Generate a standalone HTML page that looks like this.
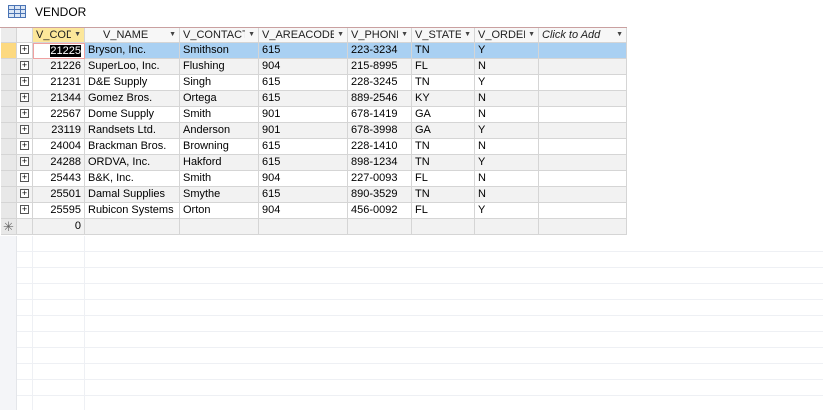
<!DOCTYPE html><html><head><style>
body{margin:0;width:823px;height:410px;background:#fff;font-family:"Liberation Sans",sans-serif;font-size:11px;color:#000;overflow:hidden;position:relative}
.t{position:absolute;left:35px;top:5px;font-size:12px}
.bar{position:absolute;left:0;top:27px;width:627px;height:1px;background:#c9a0a0}
.row{position:absolute;left:1px;height:16px;display:flex}
.row>div{box-sizing:border-box;height:16px;border-right:1px solid #d5d5d5;border-bottom:1px solid #d5d5d5;padding:0 3px;white-space:nowrap;overflow:hidden;line-height:15px;position:relative;flex:none}
.c0{width:16px}.c1{width:16px}.c2{width:52px}.c3{width:95px}.c4{width:79px}.c5{width:89px}.c6{width:64px}.c7{width:63px}.c8{width:64px}.c9{width:88px}
.row>div.c0{background:#e8e8e8;padding:0}
.h>div{background:#f7f7f7;color:#222;height:15px;line-height:14px}
.h>div.s{background:#fce79a}
.h .lbl{display:block;overflow:hidden;margin-right:10px}
.g>div{background:#f2f2f2}
.a>div{background:#a9d0f2}
.a>div.c0{background:#fcd980}
.ex{text-align:center;padding:0!important}
.ex span{display:inline-block;width:7px;height:7px;border:1px solid #555;font-size:9px;line-height:7px;text-align:center;background:#fff;vertical-align:middle;margin-top:-2px}
.r{text-align:right}
.dd{position:absolute;right:3px;top:0;font-size:7px;color:#444}
</style></head><body>
<svg style="position:absolute;left:8px;top:5px" width="18" height="13"><rect x="0.5" y="0.5" width="17" height="12" fill="#dbe6f5" stroke="#4a74b5"/><path d="M0 4.5H18M0 8.5H18M6.5 0V13M12.5 0V13" stroke="#4a74b5"/></svg>
<div class="t">VENDOR</div>
<div class="bar"></div>
<div style="position:absolute;left:0;top:236px;width:823px;height:174px;background:repeating-linear-gradient(to bottom,#fff 0 15px,#eef0f4 15px 16px)"></div>
<div style="position:absolute;left:0;top:236px;width:16px;height:174px;background:#f4f5f8"></div>
<div style="position:absolute;left:16px;top:236px;width:1px;height:174px;background:#e4e6ea"></div>
<div style="position:absolute;left:32px;top:236px;width:1px;height:174px;background:#eef0f4"></div>
<div style="position:absolute;left:84px;top:236px;width:1px;height:174px;background:#eef0f4"></div>

<div class="row h" style="top:28px"><div class="c0" style="background:#ececec"></div><div class="c1"></div><div class="c2 s"><span class="lbl">V_CODE</span><span class="dd">▼</span></div><div class="c3" style="padding-left:18px"><span class="lbl">V_NAME</span><span class="dd">▼</span></div><div class="c4"><span class="lbl">V_CONTACT</span><span class="dd">▼</span></div><div class="c5"><span class="lbl">V_AREACODE</span><span class="dd">▼</span></div><div class="c6"><span class="lbl">V_PHONE</span><span class="dd">▼</span></div><div class="c7"><span class="lbl">V_STATE</span><span class="dd">▼</span></div><div class="c8"><span class="lbl">V_ORDER</span><span class="dd">▼</span></div><div class="c9"><i>Click to Add</i><span class="dd">▼</span></div></div>

<div class="row a" style="top:43px"><div class="c0"></div><div class="c1 ex" style="background:#fff"><span>+</span></div><div class="c2 r" style="background:#fff;border:1px solid #f0a0a0"><span style="background:#000;color:#fff">21225</span></div><div class="c3">Bryson, Inc.</div><div class="c4">Smithson</div><div class="c5">615</div><div class="c6">223-3234</div><div class="c7">TN</div><div class="c8">Y</div><div class="c9"></div></div>
<div class="row g" style="top:59px"><div class="c0"></div><div class="c1 ex"><span>+</span></div><div class="c2 r">21226</div><div class="c3">SuperLoo, Inc.</div><div class="c4">Flushing</div><div class="c5">904</div><div class="c6">215-8995</div><div class="c7">FL</div><div class="c8">N</div><div class="c9"></div></div>
<div class="row" style="top:75px"><div class="c0"></div><div class="c1 ex"><span>+</span></div><div class="c2 r">21231</div><div class="c3">D&amp;E Supply</div><div class="c4">Singh</div><div class="c5">615</div><div class="c6">228-3245</div><div class="c7">TN</div><div class="c8">Y</div><div class="c9"></div></div>
<div class="row g" style="top:91px"><div class="c0"></div><div class="c1 ex"><span>+</span></div><div class="c2 r">21344</div><div class="c3">Gomez Bros.</div><div class="c4">Ortega</div><div class="c5">615</div><div class="c6">889-2546</div><div class="c7">KY</div><div class="c8">N</div><div class="c9"></div></div>
<div class="row" style="top:107px"><div class="c0"></div><div class="c1 ex"><span>+</span></div><div class="c2 r">22567</div><div class="c3">Dome Supply</div><div class="c4">Smith</div><div class="c5">901</div><div class="c6">678-1419</div><div class="c7">GA</div><div class="c8">N</div><div class="c9"></div></div>
<div class="row g" style="top:123px"><div class="c0"></div><div class="c1 ex"><span>+</span></div><div class="c2 r">23119</div><div class="c3">Randsets Ltd.</div><div class="c4">Anderson</div><div class="c5">901</div><div class="c6">678-3998</div><div class="c7">GA</div><div class="c8">Y</div><div class="c9"></div></div>
<div class="row" style="top:139px"><div class="c0"></div><div class="c1 ex"><span>+</span></div><div class="c2 r">24004</div><div class="c3">Brackman Bros.</div><div class="c4">Browning</div><div class="c5">615</div><div class="c6">228-1410</div><div class="c7">TN</div><div class="c8">N</div><div class="c9"></div></div>
<div class="row g" style="top:155px"><div class="c0"></div><div class="c1 ex"><span>+</span></div><div class="c2 r">24288</div><div class="c3">ORDVA, Inc.</div><div class="c4">Hakford</div><div class="c5">615</div><div class="c6">898-1234</div><div class="c7">TN</div><div class="c8">Y</div><div class="c9"></div></div>
<div class="row" style="top:171px"><div class="c0"></div><div class="c1 ex"><span>+</span></div><div class="c2 r">25443</div><div class="c3">B&amp;K, Inc.</div><div class="c4">Smith</div><div class="c5">904</div><div class="c6">227-0093</div><div class="c7">FL</div><div class="c8">N</div><div class="c9"></div></div>
<div class="row g" style="top:187px"><div class="c0"></div><div class="c1 ex"><span>+</span></div><div class="c2 r">25501</div><div class="c3">Damal Supplies</div><div class="c4">Smythe</div><div class="c5">615</div><div class="c6">890-3529</div><div class="c7">TN</div><div class="c8">N</div><div class="c9"></div></div>
<div class="row" style="top:203px"><div class="c0"></div><div class="c1 ex"><span>+</span></div><div class="c2 r">25595</div><div class="c3">Rubicon Systems</div><div class="c4">Orton</div><div class="c5">904</div><div class="c6">456-0092</div><div class="c7">FL</div><div class="c8">Y</div><div class="c9"></div></div>
<div class="row g" style="top:219px"><div class="c0" style="text-align:center;color:#666;font-size:13px">✳</div><div class="c1"></div><div class="c2 r">0</div><div class="c3"></div><div class="c4"></div><div class="c5"></div><div class="c6"></div><div class="c7"></div><div class="c8"></div><div class="c9"></div></div>
</body></html>
